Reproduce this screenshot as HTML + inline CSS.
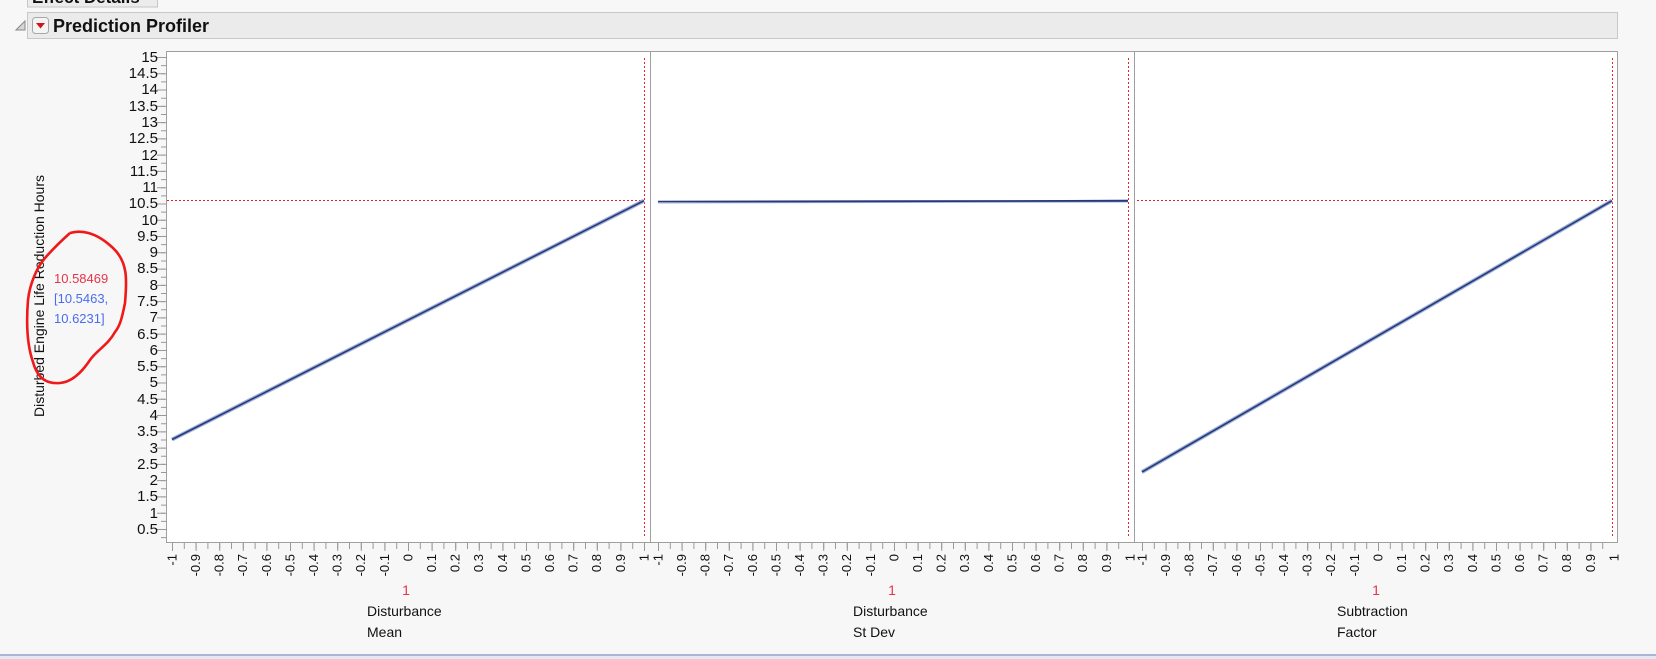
<!DOCTYPE html>
<html><head><meta charset="utf-8"><style>
html,body{margin:0;padding:0;background:#f7f7f7;width:1656px;height:659px;overflow:hidden}
svg{display:block;font-family:"Liberation Sans",sans-serif}
.yt{font-size:15px;fill:#111;text-anchor:end}
.xt{font-size:13px;fill:#111;text-anchor:end}
</style></head><body>
<svg width="1656" height="659" viewBox="0 0 1656 659" xmlns="http://www.w3.org/2000/svg">
<!-- top partial box -->
<rect x="27.5" y="-5" width="130" height="12" fill="#ececec" stroke="#c6c6c6"/>
<text x="32" y="3" font-size="17" font-weight="bold" fill="#111">Effect Details</text>
<!-- header -->
<rect x="27.5" y="12.5" width="1590" height="26" fill="#ebebeb" stroke="#c8c8c8"/>
<path d="M16 30 L25 21 L25 30 Z" fill="#d6d6d6" stroke="#8a8a8a" stroke-width="1"/>
<rect x="32.5" y="17.5" width="16" height="16" rx="3" fill="#f4f4f4" stroke="#a8a8a8"/>
<path d="M36 23 L45 23 L40.5 28.5 Z" fill="#d4141c"/>
<text x="53" y="32" font-size="18" font-weight="bold" fill="#111">Prediction Profiler</text>

<!-- plot panels -->
<rect x="166.5" y="51.5" width="1451" height="491" fill="#fff" stroke="#a0a0a0"/>
<line x1="650.5" y1="52" x2="650.5" y2="542" stroke="#a0a0a0"/>
<line x1="1134.5" y1="52" x2="1134.5" y2="542" stroke="#a0a0a0"/>

<!-- y ticks -->
<line x1="163" y1="57" x2="163" y2="542" stroke="#999" stroke-width="6" stroke-dasharray="1 7.1375" transform="translate(1,0)"/>
<line x1="162" y1="57" x2="162" y2="542" stroke="#999" stroke-width="8" stroke-dasharray="1 15.275" transform="translate(-1,0)"/>
<g class="yt">
<text x="158" y="62">15</text><text x="158" y="78">14.5</text><text x="158" y="94">14</text><text x="158" y="111">13.5</text><text x="158" y="127">13</text><text x="158" y="143">12.5</text><text x="158" y="160">12</text><text x="158" y="176">11.5</text><text x="158" y="192">11</text><text x="158" y="208">10.5</text><text x="158" y="225">10</text><text x="158" y="241">9.5</text><text x="158" y="257">9</text><text x="158" y="273">8.5</text><text x="158" y="290">8</text><text x="158" y="306">7.5</text><text x="158" y="322">7</text><text x="158" y="339">6.5</text><text x="158" y="355">6</text><text x="158" y="371">5.5</text><text x="158" y="387">5</text><text x="158" y="404">4.5</text><text x="158" y="420">4</text><text x="158" y="436">3.5</text><text x="158" y="453">3</text><text x="158" y="469">2.5</text><text x="158" y="485">2</text><text x="158" y="501">1.5</text><text x="158" y="518">1</text><text x="158" y="534">0.5</text>
</g>

<!-- x ticks -->
<g stroke="#999">
<line x1="172" y1="546" x2="645" y2="546" stroke-width="6" stroke-dasharray="1 10.8"/>
<line x1="172" y1="547" x2="645" y2="547" stroke-width="8" stroke-dasharray="1 22.6"/>
<line x1="658" y1="546" x2="1129" y2="546" stroke-width="6" stroke-dasharray="1 10.8"/>
<line x1="658" y1="547" x2="1129" y2="547" stroke-width="8" stroke-dasharray="1 22.6"/>
<line x1="1142" y1="546" x2="1613" y2="546" stroke-width="6" stroke-dasharray="1 10.8"/>
<line x1="1142" y1="547" x2="1613" y2="547" stroke-width="8" stroke-dasharray="1 22.6"/>
</g>
<g class="xt">
<text transform="translate(176.5,554) rotate(-90)">-1</text><text transform="translate(200,554) rotate(-90)">-0.9</text><text transform="translate(223.5,554) rotate(-90)">-0.8</text><text transform="translate(247,554) rotate(-90)">-0.7</text><text transform="translate(271,554) rotate(-90)">-0.6</text><text transform="translate(294.5,554) rotate(-90)">-0.5</text><text transform="translate(318,554) rotate(-90)">-0.4</text><text transform="translate(341.5,554) rotate(-90)">-0.3</text><text transform="translate(365,554) rotate(-90)">-0.2</text><text transform="translate(389,554) rotate(-90)">-0.1</text><text transform="translate(412.5,554) rotate(-90)">0</text><text transform="translate(436,554) rotate(-90)">0.1</text><text transform="translate(459.5,554) rotate(-90)">0.2</text><text transform="translate(483,554) rotate(-90)">0.3</text><text transform="translate(507,554) rotate(-90)">0.4</text><text transform="translate(530.5,554) rotate(-90)">0.5</text><text transform="translate(554,554) rotate(-90)">0.6</text><text transform="translate(577.5,554) rotate(-90)">0.7</text><text transform="translate(601,554) rotate(-90)">0.8</text><text transform="translate(625,554) rotate(-90)">0.9</text><text transform="translate(648.5,554) rotate(-90)">1</text>
</g>
<g class="xt" transform="translate(486,0)">
<text transform="translate(176.5,554) rotate(-90)">-1</text><text transform="translate(200,554) rotate(-90)">-0.9</text><text transform="translate(223.5,554) rotate(-90)">-0.8</text><text transform="translate(247,554) rotate(-90)">-0.7</text><text transform="translate(271,554) rotate(-90)">-0.6</text><text transform="translate(294.5,554) rotate(-90)">-0.5</text><text transform="translate(318,554) rotate(-90)">-0.4</text><text transform="translate(341.5,554) rotate(-90)">-0.3</text><text transform="translate(365,554) rotate(-90)">-0.2</text><text transform="translate(389,554) rotate(-90)">-0.1</text><text transform="translate(412.5,554) rotate(-90)">0</text><text transform="translate(436,554) rotate(-90)">0.1</text><text transform="translate(459.5,554) rotate(-90)">0.2</text><text transform="translate(483,554) rotate(-90)">0.3</text><text transform="translate(507,554) rotate(-90)">0.4</text><text transform="translate(530.5,554) rotate(-90)">0.5</text><text transform="translate(554,554) rotate(-90)">0.6</text><text transform="translate(577.5,554) rotate(-90)">0.7</text><text transform="translate(601,554) rotate(-90)">0.8</text><text transform="translate(625,554) rotate(-90)">0.9</text><text transform="translate(648.5,554) rotate(-90)">1</text>
</g>
<g class="xt" transform="translate(970,0)">
<text transform="translate(176.5,554) rotate(-90)">-1</text><text transform="translate(200,554) rotate(-90)">-0.9</text><text transform="translate(223.5,554) rotate(-90)">-0.8</text><text transform="translate(247,554) rotate(-90)">-0.7</text><text transform="translate(271,554) rotate(-90)">-0.6</text><text transform="translate(294.5,554) rotate(-90)">-0.5</text><text transform="translate(318,554) rotate(-90)">-0.4</text><text transform="translate(341.5,554) rotate(-90)">-0.3</text><text transform="translate(365,554) rotate(-90)">-0.2</text><text transform="translate(389,554) rotate(-90)">-0.1</text><text transform="translate(412.5,554) rotate(-90)">0</text><text transform="translate(436,554) rotate(-90)">0.1</text><text transform="translate(459.5,554) rotate(-90)">0.2</text><text transform="translate(483,554) rotate(-90)">0.3</text><text transform="translate(507,554) rotate(-90)">0.4</text><text transform="translate(530.5,554) rotate(-90)">0.5</text><text transform="translate(554,554) rotate(-90)">0.6</text><text transform="translate(577.5,554) rotate(-90)">0.7</text><text transform="translate(601,554) rotate(-90)">0.8</text><text transform="translate(625,554) rotate(-90)">0.9</text><text transform="translate(648.5,554) rotate(-90)">1</text>
</g>

<!-- red dashed crosshairs -->
<g stroke="#e8202c" stroke-width="1" stroke-dasharray="2 2" fill="none">
<line x1="167" y1="200.5" x2="644" y2="200.5"/>
<line x1="1137" y1="200.5" x2="1612" y2="200.5"/>
<line x1="644.5" y1="58" x2="644.5" y2="538"/>
<line x1="1128.5" y1="58" x2="1128.5" y2="538"/>
<line x1="1612.5" y1="58" x2="1612.5" y2="538"/>
</g>

<!-- curves -->
<line x1="172" y1="439.5" x2="644" y2="200.7" stroke="#9fb0d8" stroke-width="4"/>
<line x1="172" y1="439.5" x2="644" y2="200.7" stroke="#27397a" stroke-width="1.6"/>
<path d="M658 203 L1128 199.5 L1128 202.5 L658 203.5 Z" fill="#9fb0d8"/>
<line x1="658" y1="201.6" x2="1128" y2="200.8" stroke="#27397a" stroke-width="1.8"/>
<line x1="1142" y1="472" x2="1612" y2="200.7" stroke="#9fb0d8" stroke-width="4"/>
<line x1="1142" y1="472" x2="1612" y2="200.7" stroke="#27397a" stroke-width="1.6"/>

<!-- y title -->
<text transform="translate(44,296) rotate(-90)" font-size="14" fill="#111" text-anchor="middle">Disturbed Engine Life Reduction Hours</text>

<!-- annotation -->
<text x="54" y="283" font-size="13" fill="#e8334a">10.58469</text>
<text x="54" y="303" font-size="13" fill="#4a6cf0">[10.5463,</text>
<text x="54" y="323" font-size="13" fill="#4a6cf0">10.6231]</text>
<path d="M70 233 C80 230 95 231 113 248 C128 262 127 280 125 303 C122 318 120 326 115 332 C108 345 97 350 90 360 C82 372 72 382 60 383 C48 384 38 380 33 362 C27 345 26 325 28 300 C30 282 38 266 45 258 C52 250 60 242 70 233" fill="none" stroke="#f01818" stroke-width="2.6"/>

<!-- factor labels -->
<g font-size="14" fill="#111">
<text x="406" y="595" fill="#e8334a" text-anchor="middle">1</text>
<text x="367" y="616">Disturbance</text><text x="367" y="637">Mean</text>
<text x="892" y="595" fill="#e8334a" text-anchor="middle">1</text>
<text x="853" y="616">Disturbance</text><text x="853" y="637">St Dev</text>
<text x="1376" y="595" fill="#e8334a" text-anchor="middle">1</text>
<text x="1337" y="616">Subtraction</text><text x="1337" y="637">Factor</text>
</g>

<!-- bottom border -->
<rect x="0" y="654" width="1656" height="2" fill="#a9b4d6"/>
<rect x="0" y="656" width="1656" height="3" fill="#e3e8f4"/>
</svg>
</body></html>
